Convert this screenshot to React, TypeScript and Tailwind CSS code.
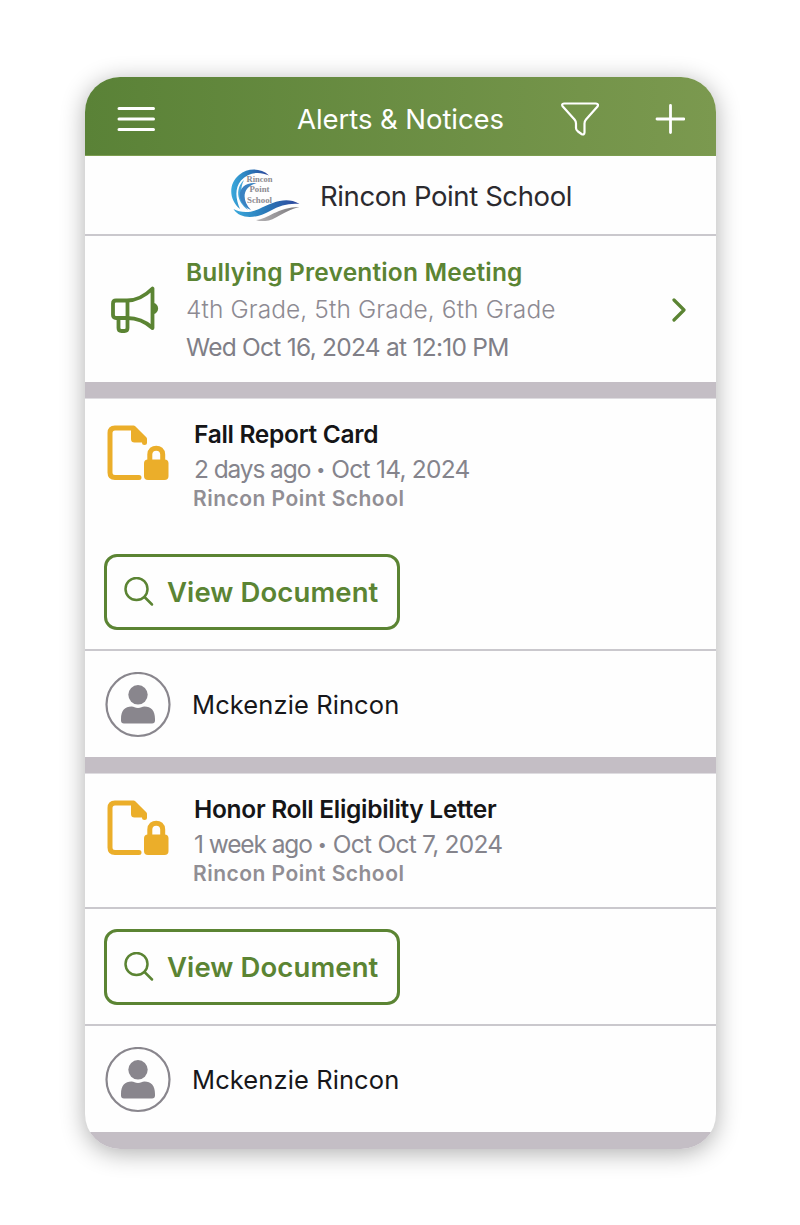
const notices = [
  { id: 1, title: "Fall Report Card", age: "2 days ago", date: "Oct 14, 2024", school: "Rincon Point School", student: "Mckenzie Rincon", divided: false },
  { id: 2, title: "Honor Roll Eligibility Letter", age: "1 week ago", date: "Oct Oct 7, 2024", school: "Rincon Point School", student: "Mckenzie Rincon", divided: true },
];

function SchoolLogo() {
  return (
    <svg width="72" height="56" viewBox="0 0 72 56" className="shrink-0">
      <defs>
        <linearGradient id="wave" x1="0" y1="0" x2="1" y2="0">
          <stop offset="0" stopColor="#3aa9dc" />
          <stop offset="0.5" stopColor="#2a78b8" />
          <stop offset="1" stopColor="#2f459b" />
        </linearGradient>
        <linearGradient id="silver" x1="0" y1="0" x2="1" y2="0">
          <stop offset="0" stopColor="#b5b3b5" />
          <stop offset="1" stopColor="#777579" />
        </linearGradient>
      </defs>
      <path d="M39 8.500C31 1 18 0.500 9 8C-2 17 -1 33 10 42C5.500 32 4.500 21 11 13.500C18 5.500 29 4 39 8.500Z" fill="url(#wave)" />
      <path d="M14 13C5.500 21 6 34 18 43C11.500 33 9 22 14 13Z" fill="#43a6da" />
      <path d="M26.500 16C11.500 14.500 5.500 27 13 37C15 40 18 42 21 43C11.500 33 12 20 26.500 16Z" fill="#3a82c2" />
      <path d="M3.500 42C10 45.500 19 46.500 29 42C43 35.500 56 29 69.500 37C59 36 50 38.500 40 44C26 52 10 52.500 3.500 42Z" fill="url(#wave)" />
      <path d="M26 53C38 52.500 47 40 69.500 40C54 43 44 55 34 54C30 54 27.500 54 26 53Z" fill="url(#silver)" />
      <g fontFamily="Liberation Serif, serif" fontWeight="700" fontSize="8" fill="#8d8b90" textAnchor="middle">
        <text x="29.500" y="14.500" textLength="26" lengthAdjust="spacingAndGlyphs">Rincon</text>
        <text x="29.500" y="25" textLength="20" lengthAdjust="spacingAndGlyphs">Point</text>
        <text x="29.500" y="36" textLength="25" lengthAdjust="spacingAndGlyphs">School</text>
      </g>
    </svg>
  );
}

function MegaphoneIcon() {
  return (
    <svg width="50" height="50" viewBox="0 0 50 50" fill="none" stroke="#5b8433" strokeWidth="3.8" strokeLinejoin="round" className="shrink-0">
      <path d="M6 14.500H17C27 14.500 36 9 42.500 2.500V42C36 36 27 32 17 32H6Q3 32 3 29V17.500Q3 14.500 6 14.500Z" />
      <path d="M17.500 14.500V32M8.500 32V42Q8.500 45 11.500 45H14.500Q17.500 45 17.500 42V32" />
      <path d="M44 17C49.500 18.500 49.500 26.500 44 28Z" fill="#5b8433" stroke="none" />
    </svg>
  );
}

function LockedFileIcon() {
  return (
    <svg width="62" height="56" viewBox="0 0 62 56" fill="none" className="shrink-0">
      <path d="M32 52.500H8Q3 52.500 3 47.500V8Q3 3 8 3H26.500L37.500 14V17.500" stroke="#ebae2a" strokeWidth="5" strokeLinecap="round" strokeLinejoin="round" />
      <path d="M24 3V14Q24 17.500 27.500 17.500H38V13L28 3Z" fill="#ebae2a" />
      <rect x="37" y="34.500" width="24.500" height="20.500" rx="4" fill="#ebae2a" />
      <path d="M42.800 36V29.500C42.800 21 55.700 21 55.700 29.500V36" stroke="#ebae2a" strokeWidth="5" />
    </svg>
  );
}

function ViewDocumentButton() {
  return (
    <button className="flex h-[76px] w-[296px] items-center rounded-[13px] border-[3px] border-[#5b8433] pl-[17px] text-[#5b8433]">
      <svg width="30" height="30" viewBox="0 0 30 30" fill="none" stroke="currentColor" strokeWidth="2.5" strokeLinecap="round">
        <circle cx="12.500" cy="12" r="11" />
        <path d="M20.500 20L28 27.500" />
      </svg>
      <span className="ml-[13px] whitespace-nowrap pt-[2px] text-[27.5px] font-semibold tracking-[0.1px]">View Document</span>
    </button>
  );
}

function StudentRow({ name }: { name: string }) {
  return (
    <div className="flex h-[106px] items-center pl-5 pt-[2px]">
      <svg width="66" height="66" viewBox="0 0 66 66" className="shrink-0">
        <circle cx="33" cy="32.500" r="31.500" fill="none" stroke="#89868d" strokeWidth="2.2" />
        <circle cx="33" cy="22.800" r="9.700" fill="#89868d" />
        <path d="M16 47C16 38.500 20 34.500 26.500 34.500C29 34.500 30 36 33 36C36 36 37 34.500 39.500 34.500C46 34.500 50 38.500 50 47V48.500Q50 51.500 47 51.500H19Q16 51.500 16 48.500Z" fill="#89868d" />
      </svg>
      <span className="ml-[21px] whitespace-nowrap text-[25.5px] tracking-[0.1px] text-[#17171a]">{name}</span>
    </div>
  );
}

export default function App() {
  return (
    <div className="h-[1225px] w-[800px] bg-white pl-[85px] pt-[77px] font-['Inter',sans-serif]">
      <div className="h-[1072px] w-[630.5px] overflow-hidden rounded-[35px] bg-[#fefefe] shadow-[0_4px_24px_rgba(0,0,0,0.32)]">
        <header className="flex h-[79px] items-center border-b border-[#7c9d50] bg-gradient-to-r from-[#5a8237] to-[#7b994f] pt-[6px] text-white">
          <svg width="38" height="26" viewBox="0 0 38 26" stroke="white" strokeWidth="3" strokeLinecap="round" className="ml-[32px]">
            <path d="M2 2.500H36.500M2 13H36.500M2 23.500H36.500" />
          </svg>
          <h1 className="ml-[142px] w-[207px] whitespace-nowrap pt-[2px] text-[27.5px] tracking-[-0.06px]">Alerts &amp; Notices</h1>
          <svg width="38" height="34" viewBox="0 0 38 34" fill="none" stroke="white" strokeWidth="2.2" strokeLinejoin="round" className="ml-[57px]">
            <path d="M3 1.500H35C37 1.500 37.500 3 36.500 4.500L25 17.500C23.700 19 23.500 20 23.500 21.500V30.500C23.500 32.500 22 33 20.500 32L17 29.500C15.500 28.500 15 27.500 15 26V21.500C15 20 14.800 19 13.500 17.500L1.800 4.500C0.700 3 1 1.500 3 1.500Z" />
          </svg>
          <svg width="30" height="30" viewBox="0 0 30 30" stroke="white" strokeWidth="2.8" strokeLinecap="round" className="ml-[56px]">
            <path d="M15.500 1.500V28.500M2 15H29" />
          </svg>
        </header>

        <div className="flex h-[80px] items-center border-b-2 border-[#cac8cd] pl-[145px]">
          <SchoolLogo />
          <span className="ml-[18px] whitespace-nowrap pt-[3px] text-[27.5px] tracking-[-0.4px] text-[#2b2a2f]">Rincon Point School</span>
        </div>

        <div className="flex h-[146px] pl-[25px]">
          <div className="pt-[50px]">
            <MegaphoneIcon />
          </div>
          <div className="ml-[26px] w-[370px] whitespace-nowrap pt-[18px] text-[24.5px]">
            <div className="font-semibold leading-[37px] tracking-[0.17px] text-[#5b8433]">Bullying Prevention Meeting</div>
            <div className="font-light leading-[37px] tracking-[0.1px] text-[#8d8a92]">4th Grade, 5th Grade, 6th Grade</div>
            <div className="leading-[39px] tracking-[-0.74px] text-[#807f87]">Wed Oct 16, 2024 at 12:10 PM</div>
          </div>
          <svg width="16" height="24" viewBox="0 0 16 24" fill="none" stroke="#5b8433" strokeWidth="3.2" strokeLinecap="round" strokeLinejoin="round" className="ml-[115px] mt-[62px]">
            <path d="M3 2L13 12L3 22" />
          </svg>
        </div>

        {notices.map((notice) => (
          <section key={notice.id}>
            <div className="h-[17px] border-b border-[#dedce0] bg-[#c4bec5]" />
            <div className={`flex h-[135px] border-b-2 pl-[22px] ${notice.divided ? "border-[#cac8cd]" : "border-transparent"}`}>
              <div className="pt-[26px]">
                <LockedFileIcon />
              </div>
              <div className="ml-[24px] whitespace-nowrap pt-[18px]">
                <div className="ml-px text-[24.5px] font-semibold leading-[35px] tracking-[-0.3px] text-[#151517]">{notice.title}</div>
                <div className="ml-px flex items-center text-[24.5px] leading-[33px] text-[#85848c]">
                  <span className="tracking-[-1.1px]">{notice.age}</span>
                  <span className="mx-[3px] mt-px w-[15px] text-center text-[16px]">•</span>
                  <span className="tracking-[-0.75px]">{notice.date}</span>
                </div>
                <div className="text-[21px] font-semibold leading-[25px] tracking-[0.48px] text-[#918e94]">{notice.school}</div>
              </div>
            </div>
            <div className="flex h-[117px] items-center border-b-2 border-[#cac8cd] pl-[19px]">
              <ViewDocumentButton />
            </div>
            <StudentRow name={notice.student} />
          </section>
        ))}

        <div className="h-[17px] bg-[#c4bec5]" />
      </div>
    </div>
  );
}
